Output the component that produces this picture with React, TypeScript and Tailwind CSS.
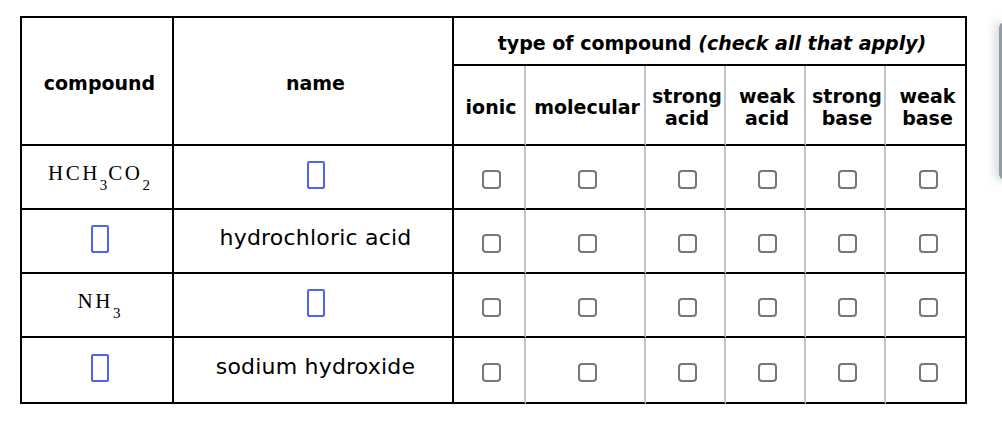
import React from "react";

const kinds = [
  ["ionic"],
  ["molecular"],
  ["strong", "acid"],
  ["weak", "acid"],
  ["strong", "base"],
  ["weak", "base"],
];

type Row = { compound: React.ReactNode | null; name: string | null };

function Formula({ parts }: { parts: [string, string?][] }) {
  return (
    <span className="font-['Liberation_Serif',serif] text-[21px] tracking-[2.5px] text-black">
      {parts.map(([main, sub], i) => (
        <React.Fragment key={i}>
          {main}
          {sub && <span className="text-[15px] tracking-[1px] align-[-10px]">{sub}</span>}
        </React.Fragment>
      ))}
    </span>
  );
}

const rows: Row[] = [
  { compound: <Formula parts={[["HCH", "3"], ["CO", "2"]]} />, name: null },
  { compound: null, name: "hydrochloric acid" },
  { compound: <Formula parts={[["NH", "3"]]} />, name: null },
  { compound: null, name: "sodium hydroxide" },
];

function BlankBox() {
  return <span className="block w-[18px] h-[28px] border-2 border-[#4a62f7] rounded-[2px] mb-[5px]" />;
}

function Checkbox() {
  return <span className="block w-[19px] h-[19px] border-2 border-[#777777] rounded-[4px] bg-white" />;
}

export default function App() {
  return (
    <div className="relative w-[1002px] h-[426px] bg-white overflow-hidden font-['DejaVu_Sans',Verdana,sans-serif] text-black">
      <div className="pl-[20px] pt-[16px]">
        <div className="grid w-fit grid-cols-[152px_280px_72px_120px_80px_80px_80px_81px] grid-rows-[48px_80px_64px_64px_64px_66px] border-l-2 border-t-2 border-black">
          <div className="row-span-2 flex items-center justify-center pl-[5px] pt-[4px] border-r-2 border-b-2 border-black text-[19px] font-bold">
            compound
          </div>
          <div className="row-span-2 flex items-center justify-center pl-[5px] pt-[4px] border-r-2 border-b-2 border-black text-[19px] font-bold">
            name
          </div>
          <div className="col-span-6 flex items-center justify-center pl-[5px] pt-[4px] border-r-2 border-b-2 border-black text-[19px] font-bold">
            type of compound&nbsp;<i>(check all that apply)</i>
          </div>
          {kinds.map((k, i) => (
            <div
              key={k.join(" ")}
              className={`flex flex-col items-center justify-center pl-[4px] pt-[4px] border-b-2 border-r-2 border-b-black text-[19px] font-bold leading-[22px] ${
                i === kinds.length - 1 ? "border-r-black" : "border-r-[#c4c4c4]"
              }`}
            >
              {k.map((w) => (
                <span key={w}>{w}</span>
              ))}
            </div>
          ))}

          {rows.map((r, ri) => (
            <React.Fragment key={ri}>
              <div className="flex items-center justify-center pl-[5px] border-r-2 border-b-2 border-black">
                {r.compound ?? <BlankBox />}
              </div>
              <div className="flex items-center justify-center pl-[5px] border-r-2 border-b-2 border-black">
                {r.name ? <span className="text-[22px] tracking-[0.2px] pb-2">{r.name}</span> : <BlankBox />}
              </div>
              {kinds.map((k, i) => (
                <div
                  key={k.join(" ")}
                  className={`flex items-center justify-center pl-[5px] pt-[5px] border-b-2 border-r-2 border-b-black ${
                    i === kinds.length - 1 ? "border-r-black" : "border-r-[#c4c4c4]"
                  }`}
                >
                  <Checkbox />
                </div>
              ))}
            </React.Fragment>
          ))}
        </div>
      </div>

      {/* side panel peeking in from the right edge */}
      <div className="absolute left-[999px] top-[22px] h-[158px] w-[20px] rounded-l-[6px] border-l-[3px] border-[#8d9ea9] bg-white shadow-[-5px_0_8px_rgba(60,80,90,0.18)]" />
    </div>
  );
}
